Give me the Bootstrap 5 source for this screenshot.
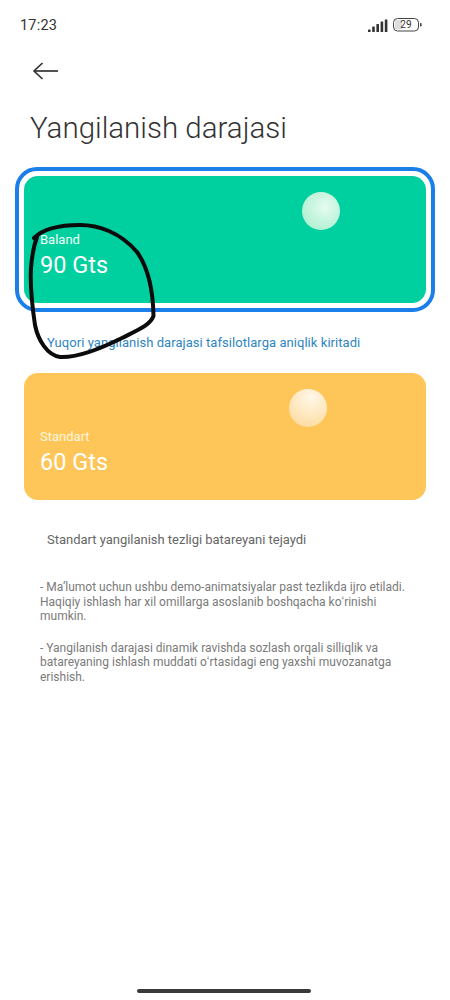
<!DOCTYPE html>
<html lang="uz">
<head>
<meta charset="utf-8">
<title>Yangilanish darajasi</title>
<link href="https://cdn.jsdelivr.net/npm/bootstrap@5.3.0/dist/css/bootstrap.min.css" rel="stylesheet">
<style>
html, body { background: #fff; }
body { font-family: Roboto, "Liberation Sans", sans-serif; width: 450px; height: 1000px; overflow: hidden; }
.screen { height: 1000px; position: relative; }
.status-row { height: 52px; padding: 17px 27px 0 20px; color: #333; font-size: 14.5px; line-height: 18px; letter-spacing: .2px; }
.back-row { height: 38px; padding-left: 32px; }
.page-title { font-size: 29.5px; font-weight: 300; color: #333; line-height: 40px; margin: 18px 0 19px 30px; }
.ring { margin: 0 15px; border: 4px solid #1a7fe8; border-radius: 22px; padding: 5px; }
.rate-card { height: 127px; border-radius: 14px; position: relative; color: #fff; padding: 55px 16px 0; }
.green-card { background: #00d09f; }
.amber-card { background: #fec658; margin: 0 24px; }
.rate-name { font-size: 13px; line-height: 18px; color: #f4fff9; }
.rate-value { font-size: 23.5px; font-weight: 400; line-height: 32px; margin-top: 0; }
.amber-card .rate-name { color: #fff6df; }
.ball { position: absolute; width: 38px; height: 38px; border-radius: 50%; top: 16px; }
.green-card .ball { left: 278px; background: radial-gradient(circle at 60% 40%, #e6fbf1 0%, #c6f5de 45%, #a2efc8 100%); }
.amber-card .ball { left: 265px; background: radial-gradient(circle at 58% 22%, #fff7e8 0%, #fee6bb 55%, #fcd58f 100%); }
.hint { font-size: 13px; line-height: 18px; padding-left: 47px; }
.hint-blue { color: #2f86c1; margin: 22px 0 21px; letter-spacing: .05px; }
.hint-grey { color: #666; margin: 31px 0 0; letter-spacing: -.02px; }
.note { font-size: 12px; line-height: 14.6px; color: #7a7a7a; margin: 0 34px 0 40px; }
.note-first { margin-top: 31px; }
.note-next { margin-top: 17px; }
.home-bar { position: absolute; left: 137px; top: 989px; width: 174px; height: 4px; border-radius: 2px; background: #3a3a3a; }
.scribble { position: absolute; left: 0; top: 0; pointer-events: none; }
.batt-text { font-size: 10px; fill: #333; font-family: Roboto, "Liberation Sans", sans-serif; }
</style>
</head>
<body>
<div class="screen">
  <div class="status-row d-flex justify-content-between align-items-start">
    <span>17:23</span>
    <svg width="56" height="16" viewBox="0 0 56 16">
      <g fill="#333">
        <rect x="1" y="12.5" width="2.6" height="2.5" rx=".6"/>
        <rect x="5.2" y="9.5" width="2.6" height="5.500" rx=".6"/>
        <rect x="9.400" y="7" width="2.6" height="8" rx=".6"/>
        <rect x="13.600" y="4.500" width="2.6" height="10.500" rx=".6"/>
        <rect x="17.800" y="2.500" width="2.6" height="12.500" rx=".6"/>
      </g>
      <rect x="26.500" y="1.500" width="25" height="12.500" rx="4" fill="#fff" stroke="#444" stroke-width="1"/>
      <rect x="28" y="3" width="7" height="9.500" rx="1" fill="#ddd"/>
      <rect x="53" y="6" width="1.6" height="3.400" rx=".6" fill="#444"/>
      <text class="batt-text" x="39" y="11.300" text-anchor="middle">29</text>
    </svg>
  </div>
  <div class="back-row d-flex align-items-center">
    <svg width="28" height="20" viewBox="0 0 28 20" fill="none" stroke="#333" stroke-width="1.7">
      <path d="M26 10H2"/><path d="M10.500 2 2 10l8.500 8"/>
    </svg>
  </div>
  <h1 class="page-title">Yangilanish darajasi</h1>

  <div class="ring">
    <div class="rate-card green-card">
      <span class="ball"></span>
      <div class="rate-name">Baland</div>
      <div class="rate-value">90 Gts</div>
    </div>
  </div>
  <p class="hint hint-blue">Yuqori yangilanish darajasi tafsilotlarga aniqlik kiritadi</p>

  <div class="rate-card amber-card">
    <span class="ball"></span>
    <div class="rate-name">Standart</div>
    <div class="rate-value">60 Gts</div>
  </div>
  <p class="hint hint-grey">Standart yangilanish tezligi batareyani tejaydi</p>

  <p class="note note-first">- Maʼlumot uchun ushbu demo-animatsiyalar past tezlikda ijro etiladi. Haqiqiy ishlash har xil omillarga asoslanib boshqacha koʻrinishi mumkin.</p>
  <p class="note note-next">- Yangilanish darajasi dinamik ravishda sozlash orqali silliqlik va batareyaning ishlash muddati oʻrtasidagi eng yaxshi muvozanatga erishish.</p>

  <svg class="scribble" width="450" height="1000" viewBox="0 0 450 1000" fill="none" stroke="#0b0b0b" stroke-width="4" stroke-linecap="round" stroke-linejoin="round">
    <path d="M34 238C42 230 58 225 80 225C98 225 120 232 137 252C147 266 153 288 153.500 316C150 325 140 329 122 338C100 349 78 358 60 357C47 355 38 340 35 325C32 305 30 285 31 268C32 255 34 245 37 237"/>
  </svg>
  <div class="home-bar"></div>
</div>
<script src="https://cdn.jsdelivr.net/npm/bootstrap@5.3.0/dist/js/bootstrap.bundle.min.js"></script>
</body>
</html>
